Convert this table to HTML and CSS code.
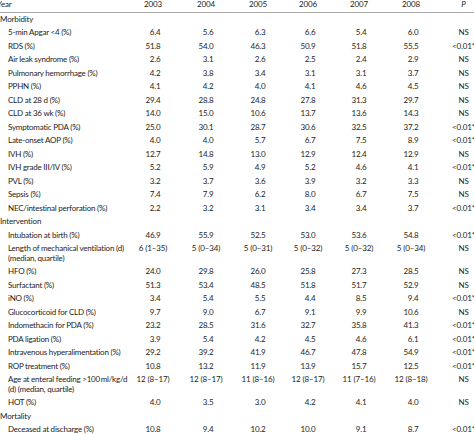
FILE: index.html
```html
<!DOCTYPE html>
<html>
<head>
<meta charset="utf-8">
<link rel="stylesheet" href="styles.css">
</head>
<body>
<div class="frame">
  <div class="row head"><span class="lbl-h">Year</span><span>2003</span><span>2004</span><span>2005</span><span>2006</span><span>2007</span><span>2008</span><span class="pval">P</span></div>

  <div class="row cat"><span>Morbidity</span></div>
  <div class="row"><span class="lbl">5-min Apgar &lt;4 (%)</span><span><i class="sd">6.4</i></span><span><i class="sd">5.6</i></span><span><i class="sd">6.3</i></span><span><i class="sd">6.6</i></span><span><i class="sd">5.4</i></span><span><i class="sd">6.0</i></span><span>NS</span></div>
  <div class="row"><span class="lbl">RDS (%)</span><span>51.8</span><span>54.0</span><span>46.3</span><span>50.9</span><span>51.8</span><span>55.5</span><span>&lt;0.01*</span></div>
  <div class="row"><span class="lbl">Air leak syndrome (%)</span><span><i class="sd">2.6</i></span><span><i class="sd">3.1</i></span><span><i class="sd">2.6</i></span><span><i class="sd">2.5</i></span><span><i class="sd">2.4</i></span><span><i class="sd">2.9</i></span><span>NS</span></div>
  <div class="row"><span class="lbl">Pulmonary hemorrhage (%)</span><span><i class="sd">4.2</i></span><span><i class="sd">3.8</i></span><span><i class="sd">3.4</i></span><span><i class="sd">3.1</i></span><span><i class="sd">3.1</i></span><span><i class="sd">3.7</i></span><span>NS</span></div>
  <div class="row"><span class="lbl">PPHN (%)</span><span><i class="sd">4.1</i></span><span><i class="sd">4.2</i></span><span><i class="sd">4.0</i></span><span><i class="sd">4.1</i></span><span><i class="sd">4.6</i></span><span><i class="sd">4.5</i></span><span>NS</span></div>
  <div class="row"><span class="lbl">CLD at 28 d (%)</span><span>29.4</span><span>28.8</span><span>24.8</span><span>27.8</span><span>31.3</span><span>29.7</span><span>NS</span></div>
  <div class="row"><span class="lbl">CLD at 36 wk (%)</span><span>14.0</span><span>15.0</span><span>10.6</span><span>13.7</span><span>13.6</span><span>14.3</span><span>NS</span></div>
  <div class="row"><span class="lbl">Symptomatic PDA (%)</span><span>25.0</span><span>30.1</span><span>28.7</span><span>30.6</span><span>32.5</span><span>37.2</span><span>&lt;0.01*</span></div>
  <div class="row"><span class="lbl">Late-onset AOP (%)</span><span><i class="sd">4.0</i></span><span><i class="sd">4.0</i></span><span><i class="sd">5.7</i></span><span><i class="sd">6.7</i></span><span><i class="sd">7.5</i></span><span><i class="sd">8.9</i></span><span>&lt;0.01*</span></div>
  <div class="row"><span class="lbl">IVH (%)</span><span>12.7</span><span>14.8</span><span>13.0</span><span>12.9</span><span>12.4</span><span>12.9</span><span>NS</span></div>
  <div class="row"><span class="lbl">IVH grade III/IV (%)</span><span><i class="sd">5.2</i></span><span><i class="sd">5.9</i></span><span><i class="sd">4.9</i></span><span><i class="sd">5.2</i></span><span><i class="sd">4.6</i></span><span><i class="sd">4.1</i></span><span>&lt;0.01*</span></div>
  <div class="row"><span class="lbl">PVL (%)</span><span><i class="sd">3.2</i></span><span><i class="sd">3.7</i></span><span><i class="sd">3.6</i></span><span><i class="sd">3.9</i></span><span><i class="sd">3.2</i></span><span><i class="sd">3.3</i></span><span>NS</span></div>
  <div class="row"><span class="lbl">Sepsis (%)</span><span><i class="sd">7.4</i></span><span><i class="sd">7.9</i></span><span><i class="sd">6.2</i></span><span><i class="sd">8.0</i></span><span><i class="sd">6.7</i></span><span><i class="sd">7.5</i></span><span>NS</span></div>
  <div class="row"><span class="lbl">NEC/intestinal perforation (%)</span><span><i class="sd">2.2</i></span><span><i class="sd">3.2</i></span><span><i class="sd">3.1</i></span><span><i class="sd">3.4</i></span><span><i class="sd">3.4</i></span><span><i class="sd">3.7</i></span><span>&lt;0.01*</span></div>

  <div class="row cat"><span>Intervention</span></div>
  <div class="row"><span class="lbl">Intubation at birth (%)</span><span>46.9</span><span>55.9</span><span>52.5</span><span>53.0</span><span>53.6</span><span>54.8</span><span>&lt;0.01*</span></div>
  <div class="row"><span class="lbl">Length of mechanical ventilation (d)<br>(median, quartile)</span><span>6 (1&#8211;35)</span><span>5 (0&#8211;34)</span><span>5 (0&#8211;31)</span><span>5 (0&#8211;32)</span><span>5 (0&#8211;32)</span><span>5 (0&#8211;34)</span><span>NS</span></div>
  <div class="row"><span class="lbl">HFO (%)</span><span>24.0</span><span>29.8</span><span>26.0</span><span>25.8</span><span>27.3</span><span>28.5</span><span>NS</span></div>
  <div class="row"><span class="lbl">Surfactant (%)</span><span>51.3</span><span>53.4</span><span>48.5</span><span>51.8</span><span>51.7</span><span>52.9</span><span>NS</span></div>
  <div class="row"><span class="lbl">iNO (%)</span><span><i class="sd">3.4</i></span><span><i class="sd">5.4</i></span><span><i class="sd">5.5</i></span><span><i class="sd">4.4</i></span><span><i class="sd">8.5</i></span><span><i class="sd">9.4</i></span><span>&lt;0.01*</span></div>
  <div class="row"><span class="lbl">Glucocorticoid for CLD (%)</span><span><i class="sd">9.7</i></span><span><i class="sd">9.0</i></span><span><i class="sd">6.7</i></span><span><i class="sd">9.1</i></span><span><i class="sd">9.9</i></span><span>10.6</span><span>NS</span></div>
  <div class="row"><span class="lbl">Indomethacin for PDA (%)</span><span>23.2</span><span>28.5</span><span>31.6</span><span>32.7</span><span>35.8</span><span>41.3</span><span>&lt;0.01*</span></div>
  <div class="row"><span class="lbl">PDA ligation (%)</span><span><i class="sd">3.9</i></span><span><i class="sd">5.4</i></span><span><i class="sd">4.2</i></span><span><i class="sd">4.5</i></span><span><i class="sd">4.6</i></span><span><i class="sd">6.1</i></span><span>&lt;0.01*</span></div>
  <div class="row"><span class="lbl">Intravenous hyperalimentation (%)</span><span>29.2</span><span>39.2</span><span>41.9</span><span>46.7</span><span>47.8</span><span>54.9</span><span>&lt;0.01*</span></div>
  <div class="row"><span class="lbl">ROP treatment (%)</span><span>10.8</span><span>13.2</span><span>11.9</span><span>13.9</span><span>15.7</span><span>12.5</span><span>&lt;0.01*</span></div>
  <div class="row"><span class="lbl">Age at enteral feeding &gt;100&#8201;ml/kg/d<br>(d) (median, quartile)</span><span>12 (8&#8211;17)</span><span>12 (8&#8211;17)</span><span>11 (8&#8211;16)</span><span>12 (8&#8211;17)</span><span>11 (7&#8211;16)</span><span>12 (8&#8211;18)</span><span>NS</span></div>
  <div class="row"><span class="lbl">HOT (%)</span><span><i class="sd">4.0</i></span><span><i class="sd">3.5</i></span><span><i class="sd">3.0</i></span><span><i class="sd">4.2</i></span><span><i class="sd">4.1</i></span><span><i class="sd">4.0</i></span><span>NS</span></div>

  <div class="row cat"><span>Mortality</span></div>
  <div class="row"><span class="lbl">Deceased at discharge (%)</span><span>10.8</span><span><i class="sd">9.4</i></span><span>10.2</span><span>10.0</span><span><i class="sd">9.1</i></span><span><i class="sd">8.7</i></span><span>&lt;0.01*</span></div>
</div>
</body>
</html>
```

FILE: styles.css
```css
html, body {
  margin: 0;
  padding: 0;
  background: #ffffff;
}

body {
  width: 474px;
  height: 434px;
  overflow: hidden;
}

.frame {
  width: 500px;
  margin: -2px 0 0 -3px;
  font-family: "Lato", "Open Sans", sans-serif;
  font-size: 8px;
  letter-spacing: -0.15px;
  color: #242424;
}

.row {
  display: grid;
  grid-template-columns: 130px 52px 54px 50px 50px 52px 52px 53px;
  padding: 2px 0;
  line-height: 9.5px;
  white-space: nowrap;
}

.row > span {
  text-align: center;
}

.row > span.lbl,
.row > span.lbl-h {
  text-align: left;
}

.row > span.lbl {
  padding-left: 11px;
  letter-spacing: -0.22px;
}

.row.head {
  border-bottom: 1px solid #a8a8a8;
}

.row.cat {
  display: block;
  padding-left: 3px;
}

.pval {
  font-style: italic;
}

.sd {
  font-style: normal;
  padding-left: 4.2px;
}
```
